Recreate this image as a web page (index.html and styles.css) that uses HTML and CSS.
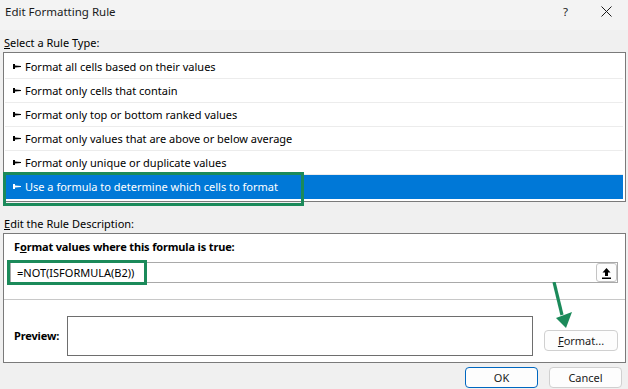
FILE: index.html
```html
<!DOCTYPE html>
<html>
<head>
<meta charset="utf-8">
<link rel="stylesheet" href="styles.css">
</head>
<body>
<div class="dialog">
  <div class="titlebar">
    <span class="title">Edit Formatting Rule</span>
    <span class="help">?</span>
    <svg class="close" width="11" height="11" viewBox="0 0 11 11"><path d="M0.5 0.5 L10.5 10.5 M10.5 0.5 L0.5 10.5" stroke="#1a1a1a" stroke-width="1"/></svg>
  </div>

  <div class="label label-top"><u>S</u>elect a Rule Type:</div>
  <div class="listbox">
    <div class="row"><svg class="bul" width="8" height="5" viewBox="0 0 8 5"><polygon points="0,0 2,0 2,1.4 8,2 8,3 2,3.6 2,5 0,5" fill="#000"/></svg>Format all cells based on their values</div>
    <div class="row"><svg class="bul" width="8" height="5" viewBox="0 0 8 5"><polygon points="0,0 2,0 2,1.4 8,2 8,3 2,3.6 2,5 0,5" fill="#000"/></svg>Format only cells that contain</div>
    <div class="row"><svg class="bul" width="8" height="5" viewBox="0 0 8 5"><polygon points="0,0 2,0 2,1.4 8,2 8,3 2,3.6 2,5 0,5" fill="#000"/></svg>Format only top or bottom ranked values</div>
    <div class="row"><svg class="bul" width="8" height="5" viewBox="0 0 8 5"><polygon points="0,0 2,0 2,1.4 8,2 8,3 2,3.6 2,5 0,5" fill="#000"/></svg>Format only values that are above or below average</div>
    <div class="row"><svg class="bul" width="8" height="5" viewBox="0 0 8 5"><polygon points="0,0 2,0 2,1.4 8,2 8,3 2,3.6 2,5 0,5" fill="#000"/></svg>Format only unique or duplicate values</div>
    <div class="row selected"><svg class="bul" width="8" height="5" viewBox="0 0 8 5"><polygon points="0,0 2,0 2,1.4 8,2 8,3 2,3.6 2,5 0,5" fill="#fff"/></svg>Use a formula to determine which cells to format</div>
    <div class="hl hl-rule"></div>
  </div>

  <div class="label label-desc"><u>E</u>dit the Rule Description:</div>
  <div class="descbox">
    <div class="bold-label">F<u>o</u>rmat values where this formula is true:</div>
    <div class="formula">
      <span class="formula-text">=NOT(ISFORMULA(B2))</span>
      <span class="collapse-btn"><svg width="11" height="12" viewBox="0 0 11 12"><path d="M5.5 1 L1.5 5.5 H4 V9 H7 V5.5 H9.5 Z" fill="#000"/><rect x="1" y="10.5" width="9" height="1.5" fill="#000"/></svg></span>
      <div class="hl hl-formula"></div>
    </div>
    <div class="sep"></div>
    <div class="preview-row">
      <span class="bold-label preview-label">Preview:</span>
      <div class="preview-box"></div>
      <span class="btn btn-format"><u>F</u>ormat...</span>
    </div>
  </div>

  <div class="footer">
    <span class="btn btn-ok">OK</span>
    <span class="btn btn-cancel">Cancel</span>
  </div>

  <svg class="arrow" width="30" height="48" viewBox="0 0 30 48"><line x1="9" y1="0" x2="17" y2="33" stroke="#1b8a5a" stroke-width="3.2"/><polygon points="11,36 27,30 21,46" fill="#1b8a5a"/></svg>
</div>
</body>
</html>
```

FILE: styles.css
```css
* { box-sizing: border-box; }
html, body { margin: 0; padding: 0; }
body { background: #f0f0f0; }
.dialog {
  position: relative;
  width: 628px;
  height: 389px;
  background: #f0f0f0;
  font-family: "Noto Sans", "Liberation Sans", sans-serif;
  font-size: 11px;
  color: #000;
  display: flex;
  flex-direction: column;
  overflow: hidden;
}
.titlebar {
  height: 30px;
  flex: none;
  display: flex;
  align-items: center;
  padding-left: 5px;
  padding-right: 16px;
  background: #f3f3f3;
  padding-bottom: 7px;
  font-size: 11.5px;
}
.title { flex: 1; color: #1a1a1a; }
.help { margin-right: 33px; color: #1a1a1a; }
.close { display: block; }
.label { height: 16px; line-height: 16px; padding-left: 4px; }
.label-top { margin-top: 5px; }
.label-desc { margin-top: 14px; }
.listbox {
  position: relative;
  margin: 1px 2px 0 3px;
  height: 150px;
  border: 1px solid #7a7a7a;
  background: #fff;
  padding: 2px 2px 2px 1px;
}
.row {
  height: 24px;
  display: flex;
  align-items: center;
  padding-left: 8px;
  border-bottom: 1px solid #ececec;
  white-space: nowrap;
}
.row .bul { margin-right: 4px; flex: none; }
.row.selected { background: #0078d7; color: #fff; border-bottom-color: #0078d7; }
.hl { position: absolute; border: 3px solid #1b8a5a; pointer-events: none; }
.hl-rule { left: -1px; top: 119px; width: 301px; height: 34px; }
.descbox {
  margin: 1px 2px 0 3px;
  height: 130px;
  border: 1px solid #7a7a7a;
  background: #fff;
  display: flex;
  flex-direction: column;
}
.bold-label { font-weight: bold; line-height: 16px; letter-spacing: -0.15px; }
.descbox > .bold-label { margin: 5px 0 0 10px; height: 16px; }
.formula {
  position: relative;
  margin: 7px 0 0 6px;
  width: 608px;
  height: 21px;
  border: 1px solid #a9a9a9;
  display: flex;
  align-items: center;
  padding-left: 6px;
}
.formula-text { flex: 1; }
.collapse-btn {
  width: 21px;
  height: 19px;
  border: 1px solid #c4c4c4;
  border-radius: 3px;
  background: #fdfdfd;
  display: flex;
  align-items: center;
  justify-content: center;
}
.collapse-btn svg { display: block; }
.hl-formula { left: -4px; top: -3px; width: 140px; height: 25px; }
.sep { margin-top: 16px; height: 1px; background: #c8c8c8; }
.preview-row {
  display: flex;
  align-items: center;
  padding: 16px 0 0 10px;
}
.preview-label { width: 53px; }
.preview-box {
  width: 466px;
  height: 40px;
  border: 1px solid #6e6e6e;
  background: #fff;
}
.btn {
  display: flex;
  align-items: center;
  justify-content: center;
  height: 21px;
  background: #fdfdfd;
  border: 1px solid #d0d0d0;
  border-radius: 4px;
  color: #1a1a1a;
}
.btn-format { width: 74px; margin-left: 11px; margin-top: 8px; }
.footer {
  display: flex;
  justify-content: flex-end;
  gap: 11px;
  margin-top: 4px;
  padding-right: 6px;
}
.btn-ok { width: 73px; border: 1px solid #0067c0; }
.btn-cancel { width: 73px; }
.arrow { position: absolute; left: 545px; top: 282px; }
```
